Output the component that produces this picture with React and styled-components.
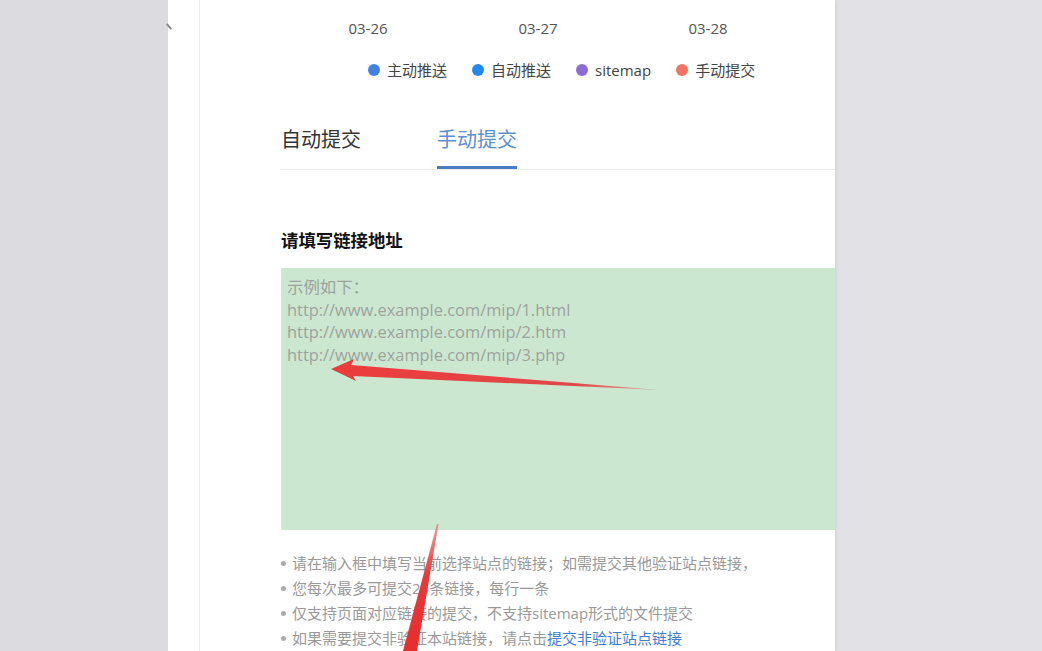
import React from "react";
import styled, { createGlobalStyle } from "styled-components";

const Global = createGlobalStyle`
  html, body { margin: 0; padding: 0; }
  body {
    background: #e2e1e5;
    overflow: hidden;
    font-family: "Open Sans", "Noto Sans CJK SC", sans-serif;
  }
`;

const Page = styled.div`
  position: relative;
  display: flex;
  height: 651px;
  width: 1042px;
  overflow: hidden;
`;

const Gutter = styled.div`
  position: relative;
  width: 168px;
  flex: none;
  background: #dcdbdf;
`;

const Tick = styled.div`
  position: absolute;
  left: 168px;
  top: 23px;
  width: 2px;
  height: 7px;
  background: #8a8a8a;
  transform: rotate(-40deg);
`;

const Panel = styled.div`
  display: flex;
  width: 667px;
  flex: none;
  background: #ffffff;
  box-shadow: 1px 0 3px rgba(0, 0, 0, 0.08);
`;

const Strip = styled.div`
  width: 31px;
  flex: none;
  border-right: 1px solid #efefef;
`;

const Content = styled.div`
  flex: 1;
  min-width: 0;
  padding-left: 81px;
  overflow: hidden;
  display: flex;
  flex-direction: column;
`;

const AxisRow = styled.div`
  display: grid;
  grid-template-columns: repeat(3, 170px);
  margin-top: 18px;
  padding-left: 2px;
  height: 20px;
  line-height: 20px;
  font-size: 15px;
  color: #555;
`;

const AxisLabel = styled.span`
  text-align: center;
`;

const Legend = styled.div`
  display: flex;
  gap: 25px;
  margin-top: 22px;
  padding-left: 87px;
  height: 20px;
  line-height: 20px;
  font-size: 15px;
  color: #444;
`;

const LegendItem = styled.div`
  display: flex;
  align-items: center;
  gap: 7px;
  white-space: nowrap;
`;

const Dot = styled.span`
  width: 12px;
  height: 12px;
  border-radius: 50%;
  background: ${(p) => p.$color};
`;

const TabBar = styled.div`
  display: flex;
  gap: 76px;
  margin-top: 46px;
  border-bottom: 1px solid #ebebeb;
`;

const Tab = styled.div`
  font-size: 20px;
  line-height: 28px;
  padding-bottom: 12px;
  border-bottom: 3px solid ${(p) => (p.$active ? "#4a7cc2" : "transparent")};
  color: ${(p) => (p.$active ? "#5a8fd2" : "#333")};
  white-space: nowrap;
`;

const Heading = styled.h3`
  margin: 58px 0 0;
  font-size: 17.4px;
  line-height: 24px;
  font-weight: bold;
  color: #111;
`;

const Input = styled.textarea`
  display: block;
  margin-top: 16px;
  width: 640px;
  height: 265px;
  box-sizing: border-box;
  padding: 8px 6px;
  border: none;
  border-radius: 2px;
  outline: none;
  resize: none;
  background: #cce7d0;
  font-family: "Open Sans", "Noto Sans CJK SC", sans-serif;
  font-size: 16.4px;
  line-height: 22.5px;
  color: #666;
  &::placeholder {
    color: #9ca39d;
  }
`;

const Notes = styled.ul`
  list-style: none;
  margin: 21px 0 0;
  padding: 0;
  font-size: 15px;
  line-height: 25px;
  color: #999;
`;

const Note = styled.li`
  position: relative;
  padding-left: 11px;
  white-space: nowrap;
  &::before {
    content: "";
    position: absolute;
    left: 0;
    top: 10px;
    width: 5px;
    height: 5px;
    border-radius: 50%;
    background: #aaa;
  }
`;

const Link = styled.a`
  color: #3f7cd4;
  text-decoration: none;
`;

const Overlay = styled.svg`
  position: absolute;
  left: 0;
  top: 0;
  pointer-events: none;
`;

const legend = [
  { label: "主动推送", color: "#4380e6" },
  { label: "自动推送", color: "#2189ee" },
  { label: "sitemap", color: "#8c6cd6" },
  { label: "手动提交", color: "#f07461" },
];

const placeholder =
  "示例如下：\nhttp://www.example.com/mip/1.html\nhttp://www.example.com/mip/2.htm\nhttp://www.example.com/mip/3.php";

export default function App() {
  return (
    <>
      <Global />
      <Page>
        <Gutter>
          <Tick />
        </Gutter>
        <Panel>
          <Strip />
          <Content>
            <AxisRow>
              <AxisLabel>03-26</AxisLabel>
              <AxisLabel>03-27</AxisLabel>
              <AxisLabel>03-28</AxisLabel>
            </AxisRow>
            <Legend>
              {legend.map((l) => (
                <LegendItem key={l.label}>
                  <Dot $color={l.color} />
                  {l.label}
                </LegendItem>
              ))}
            </Legend>
            <TabBar>
              <Tab>自动提交</Tab>
              <Tab $active>手动提交</Tab>
            </TabBar>
            <Heading>请填写链接地址</Heading>
            <Input placeholder={placeholder} />
            <Notes>
              <Note>请在输入框中填写当前选择站点的链接；如需提交其他验证站点链接，</Note>
              <Note>您每次最多可提交20条链接，每行一条</Note>
              <Note>仅支持页面对应链接的提交，不支持sitemap形式的文件提交</Note>
              <Note>
                如果需要提交非验证本站链接，请点击<Link href="#">提交非验证站点链接</Link>
              </Note>
            </Notes>
          </Content>
        </Panel>
        <Overlay width="1042" height="651" viewBox="0 0 1042 651">
          <defs>
            <linearGradient id="a1" x1="331" y1="369" x2="660" y2="390" gradientUnits="userSpaceOnUse">
              <stop offset="0" stopColor="#ec3b3b" />
              <stop offset="0.75" stopColor="#e0484a" />
              <stop offset="1" stopColor="#d98a80" stopOpacity="0.6" />
            </linearGradient>
            <linearGradient id="a2" x1="437" y1="525" x2="410" y2="651" gradientUnits="userSpaceOnUse">
              <stop offset="0" stopColor="#e66a6a" stopOpacity="0.7" />
              <stop offset="0.4" stopColor="#e83a3a" />
              <stop offset="1" stopColor="#e62e2e" />
            </linearGradient>
          </defs>
          <polygon
            points="331,369 354,359 351,365 660,390 353,376 356,381"
            fill="url(#a1)"
          />
          <polygon points="437,524 438.5,524 417,651 403,651" fill="url(#a2)" />
        </Overlay>
      </Page>
    </>
  );
}
